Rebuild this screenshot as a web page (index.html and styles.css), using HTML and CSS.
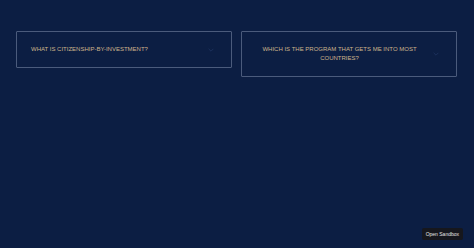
FILE: index.html
```html
<!DOCTYPE html>
<html>
<head>
<meta charset="utf-8">
<link rel="stylesheet" href="styles.css">
</head>
<body>
<div class="faq">
  <div class="item">
    <span class="q">What is Citizenship-by-Investment?</span>
    <svg class="chev" viewBox="0 0 10 6" width="6" height="4"><path d="M1 1 L5 5 L9 1" fill="none" stroke="#1f3560" stroke-width="1.4"/></svg>
  </div>
  <div class="item">
    <span class="q">Which is the program that gets me into most countries?</span>
    <svg class="chev" viewBox="0 0 10 6" width="6" height="4"><path d="M1 1 L5 5 L9 1" fill="none" stroke="#1f3560" stroke-width="1.4"/></svg>
  </div>
</div>
<button class="sandbox">Open Sandbox</button>
</body>
</html>
```
FILE: styles.css
```css
html, body {
  margin: 0;
  padding: 0;
  height: 100%;
}
body {
  background: #0c1e43;
  font-family: "Liberation Sans", Arial, sans-serif;
  position: relative;
}
.faq {
  display: flex;
  align-items: flex-start;
  gap: 9px;
  padding: 31px 17px 0 16px;
}
.item {
  flex: 1;
  display: flex;
  align-items: center;
  justify-content: space-between;
  gap: 10px;
  border: 1px solid #4b5b7c;
  border-radius: 1px;
  padding: 13px 17px 13px 14px;
}
.q {
  color: #cdb48c;
  font-size: 6px;
  line-height: 9px;
  text-transform: uppercase;
  text-align: center;
}
.chev {
  flex: none;
}
.sandbox {
  position: absolute;
  right: 11px;
  bottom: 8px;
  background: #16171d;
  color: #e6e6e6;
  border: none;
  border-radius: 2px;
  font-family: "Liberation Sans", Arial, sans-serif;
  font-size: 5px;
  padding: 3px 4px;
  height: 12px;
}
```
